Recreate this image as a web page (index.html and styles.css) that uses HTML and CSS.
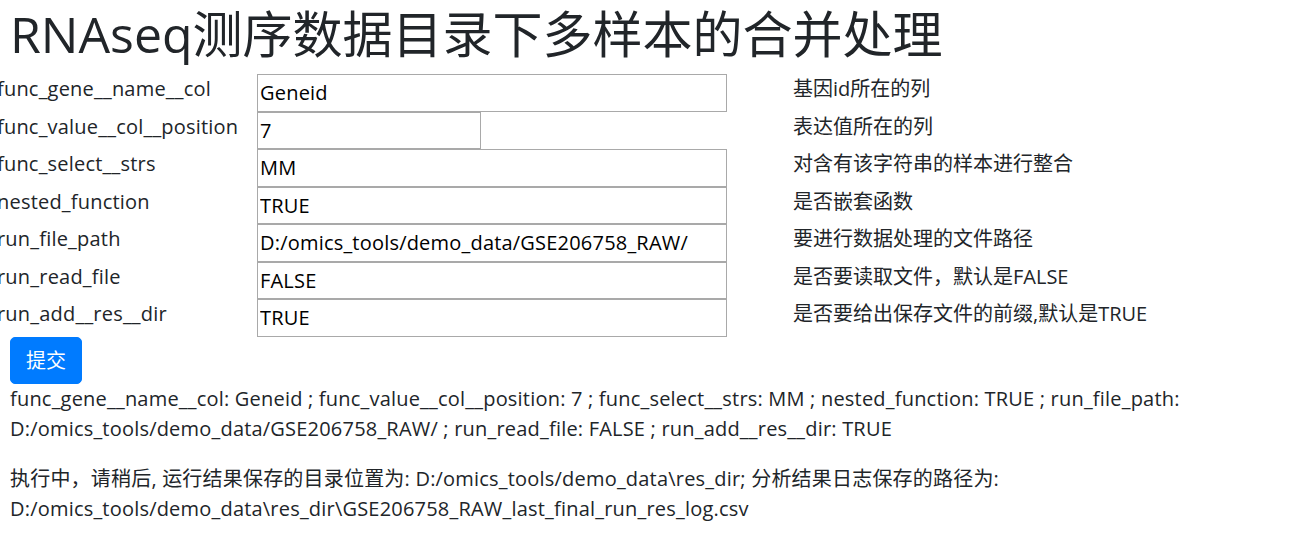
FILE: index.html
```html
<!DOCTYPE html>
<html lang="zh-CN">
<head>
<meta charset="utf-8">
<title>RNAseq测序数据目录下多样本的合并处理</title>
<link rel="stylesheet" href="styles.css">
</head>
<body>
<main class="page">
  <h1 class="title">RNAseq测序数据目录下多样本的合并处理</h1>
  <form class="params">
    <div class="param-row">
      <label class="param-label">func_gene__name__col</label>
      <div class="param-field"><input class="param-input" type="text" value="Geneid"></div>
      <div class="param-desc">基因id所在的列</div>
    </div>
    <div class="param-row">
      <label class="param-label">func_value__col__position</label>
      <div class="param-field"><input class="param-input param-input--short" type="text" value="7"></div>
      <div class="param-desc">表达值所在的列</div>
    </div>
    <div class="param-row">
      <label class="param-label">func_select__strs</label>
      <div class="param-field"><input class="param-input" type="text" value="MM"></div>
      <div class="param-desc">对含有该字符串的样本进行整合</div>
    </div>
    <div class="param-row">
      <label class="param-label">nested_function</label>
      <div class="param-field"><input class="param-input" type="text" value="TRUE"></div>
      <div class="param-desc">是否嵌套函数</div>
    </div>
    <div class="param-row">
      <label class="param-label">run_file_path</label>
      <div class="param-field"><input class="param-input" type="text" value="D:/omics_tools/demo_data/GSE206758_RAW/"></div>
      <div class="param-desc">要进行数据处理的文件路径</div>
    </div>
    <div class="param-row">
      <label class="param-label">run_read_file</label>
      <div class="param-field"><input class="param-input" type="text" value="FALSE"></div>
      <div class="param-desc">是否要读取文件，默认是FALSE</div>
    </div>
    <div class="param-row">
      <label class="param-label">run_add__res__dir</label>
      <div class="param-field"><input class="param-input" type="text" value="TRUE"></div>
      <div class="param-desc">是否要给出保存文件的前缀,默认是TRUE</div>
    </div>
    <button class="submit-btn" type="button">提交</button>
  </form>
  <p class="output">func_gene__name__col: Geneid ; func_value__col__position: 7 ; func_select__strs: MM ; nested_function: TRUE ; run_file_path: D:/omics_tools/demo_data/GSE206758_RAW/ ; run_read_file: FALSE ; run_add__res__dir: TRUE</p>
  <p class="output">执行中，请稍后, 运行结果保存的目录位置为: D:/omics_tools/demo_data\res_dir; 分析结果日志保存的路径为: D:/omics_tools/demo_data\res_dir\GSE206758_RAW_last_final_run_res_log.csv</p>
</main>
</body>
</html>
```
FILE: styles.css
```css
* {
  box-sizing: border-box;
}

html, body {
  margin: 0;
  padding: 0;
  background: #ffffff;
}

body {
  font-family: "Open Sans", "Noto Sans CJK SC", sans-serif;
  font-size: 20px;
  line-height: 30px;
  color: #212529;
  overflow: hidden;
}

.page {
  padding: 0 10px;
}

.title {
  margin: 0 0 10px 0;
  padding-top: 4px;
  font-size: 50px;
  line-height: 60px;
  font-weight: 400;
  color: #212529;
}

.params {
  display: flex;
  flex-direction: column;
  align-items: flex-start;
  margin-left: -13px;
}

.param-row {
  display: grid;
  grid-template-columns: 260px 470px auto;
  height: 37.5px;
  width: 100%;
}

.param-label {
  line-height: 30px;
  white-space: nowrap;
  letter-spacing: 0.2px;
}

.param-field {
  display: flex;
}

.param-input {
  width: 470px;
  height: 37.5px;
  margin: 0;
  padding: 1px 2px;
  border: 1px solid #a9a9a9;
  border-radius: 0;
  font-family: "Open Sans", "Noto Sans CJK SC", sans-serif;
  font-size: 20px;
  letter-spacing: 0.2px;
  color: #000000;
  background: #ffffff;
}

.param-input--short {
  width: 224px;
}

.param-desc {
  margin-left: 66px;
  line-height: 30px;
  white-space: nowrap;
}

.submit-btn {
  margin-left: 13px;
  padding: 7.5px 15px;
  border: 1px solid #007bff;
  border-radius: 5px;
  background: #007bff;
  color: #ffffff;
  font-family: "Noto Sans CJK SC", sans-serif;
  font-size: 20px;
  line-height: 30px;
}

.output {
  margin: 0 0 20px 0;
  letter-spacing: 0.2px;
}
```
